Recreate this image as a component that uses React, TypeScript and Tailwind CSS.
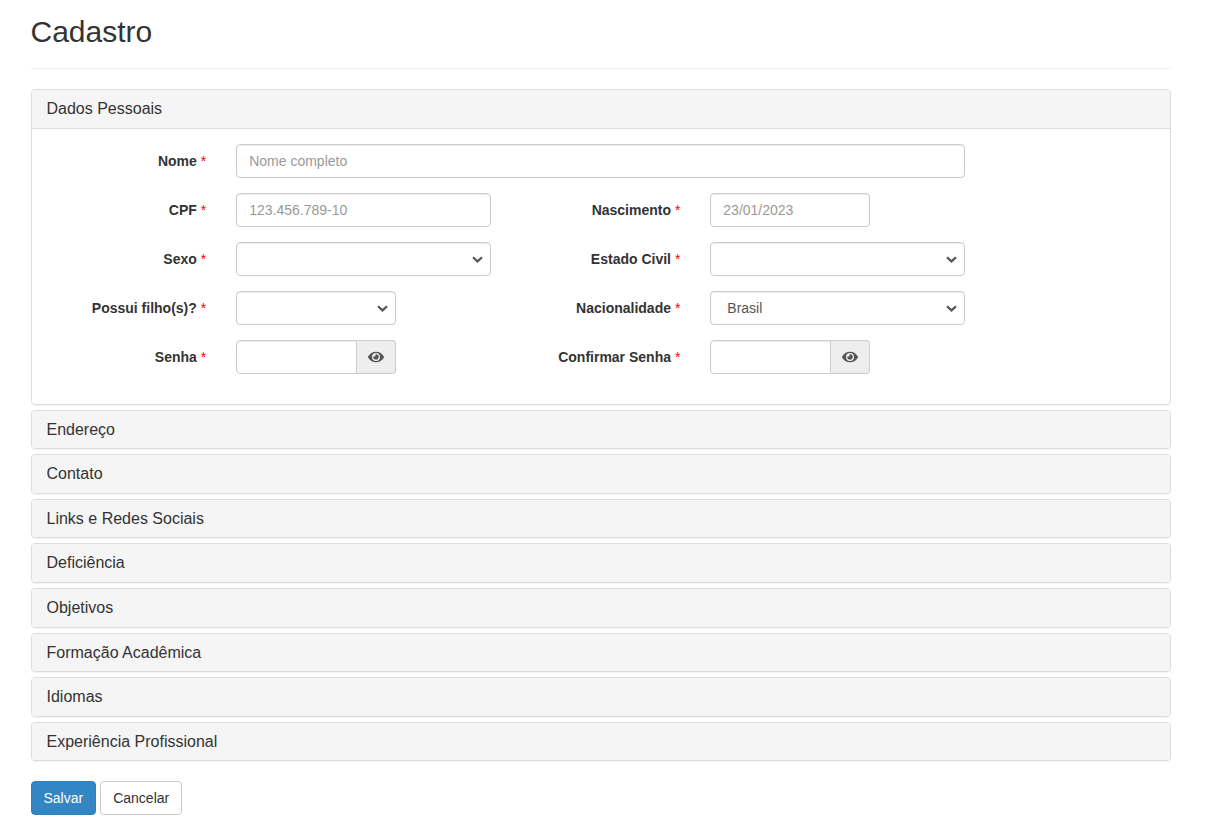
import React from 'react';
import { FaEye } from 'react-icons/fa';

const fieldClass =
  'w-full h-[34px] px-3 py-[6px] text-sm text-[#555] bg-white border border-[#ccc] rounded-[4px] shadow-[inset_0_1px_1px_rgba(0,0,0,0.075)] placeholder:text-[#999] outline-none';

const Label = ({ text }: { text: string }) => (
  <label className="col-span-2 pt-[7px] text-right text-sm leading-[20px] font-bold text-[#333]">
    {text} <span className="font-normal text-[#f00]">*</span>
  </label>
);

const Select = ({ value }: { value?: string }) => (
  <div className="relative">
    <select className={`${fieldClass} pl-4 appearance-none`} defaultValue={value ?? ''}>
      <option value=""></option>
      {value && <option value={value}>{value}</option>}
    </select>
    {/* chevron drawn over the native select */}
    <svg
      className="absolute right-[7.5px] top-[14px] pointer-events-none"
      width="11"
      height="7"
      viewBox="0 0 11 7"
      fill="none"
    >
      <path d="M1 1.2 L5.5 5.4 L10 1.2" stroke="#555" strokeWidth="2.2" />
    </svg>
  </div>
);

const Password = () => (
  <div className="flex h-[34px]">
    <input
      type="text"
      className="w-[120px] h-[34px] min-w-0 grow px-3 py-[6px] text-sm text-[#555] bg-white border border-[#ccc] rounded-l-[4px] shadow-[inset_0_1px_1px_rgba(0,0,0,0.075)] outline-none"
    />
    <span className="w-[39px] shrink-0 flex items-center justify-center bg-[#eee] border border-l-0 border-[#ccc] rounded-r-[4px] text-[#555]">
      <FaEye size={16} />
    </span>
  </div>
);

const Row = ({ children }: { children: React.ReactNode }) => (
  <div className="grid grid-cols-12 gap-x-[30px]">{children}</div>
);

const collapsed = [
  'Endereço',
  'Contato',
  'Links e Redes Sociais',
  'Deficiência',
  'Objetivos',
  'Formação Acadêmica',
  'Idiomas',
  'Experiência Profissional',
];

const PanelHeading = ({ title }: { title: string }) => (
  <div className="px-[15px] py-[10px] bg-[#f5f5f5] text-base leading-[17.6px] text-[#333]">{title}</div>
);

export default function App() {
  return (
    <div
      className="w-[1140px] ml-[30.5px] pt-[15px] text-sm text-[#333]"
      style={{ fontFamily: '"Liberation Sans", Arial, sans-serif' }}
    >
      <div className="pb-[9px] mb-5 border-b border-[#eee]">
        <h1 className="mb-[11px] text-[30px] leading-[33px] font-normal text-[#333]">Cadastro</h1>
      </div>

      <div className="flex flex-col gap-[5px]">
        <div className="border border-[#ddd] rounded-[4px] overflow-hidden shadow-[0_1px_1px_rgba(0,0,0,0.05)]">
          <PanelHeading title="Dados Pessoais" />
          <div className="border-t border-[#ddd] pt-[15px] px-[15px] pb-[30px] flex flex-col gap-[15px]">
            <Row>
              <Label text="Nome" />
              <div className="col-span-8">
                <input type="text" placeholder="Nome completo" className={fieldClass} />
              </div>
            </Row>
            <Row>
              <Label text="CPF" />
              <div className="col-span-3">
                <input type="text" placeholder="123.456.789-10" className={fieldClass} />
              </div>
              <Label text="Nascimento" />
              <div className="col-span-2">
                <input type="text" placeholder="23/01/2023" className={fieldClass} />
              </div>
            </Row>
            <Row>
              <Label text="Sexo" />
              <div className="col-span-3">
                <Select />
              </div>
              <Label text="Estado Civil" />
              <div className="col-span-3">
                <Select />
              </div>
            </Row>
            <Row>
              <Label text="Possui filho(s)?" />
              <div className="col-span-2">
                <Select />
              </div>
              <div className="col-span-1" />
              <Label text="Nacionalidade" />
              <div className="col-span-3">
                <Select value="Brasil" />
              </div>
            </Row>
            <Row>
              <Label text="Senha" />
              <div className="col-span-2">
                <Password />
              </div>
              <div className="col-span-1" />
              <Label text="Confirmar Senha" />
              <div className="col-span-2">
                <Password />
              </div>
            </Row>
          </div>
        </div>

        {collapsed.map((title) => (
          <div
            key={title}
            className="border border-[#ddd] rounded-[4px] overflow-hidden shadow-[0_1px_1px_rgba(0,0,0,0.05)]"
          >
            <PanelHeading title={title} />
          </div>
        ))}
      </div>

      <div className="flex gap-1 mt-5">
        <button className="h-[34px] px-3 text-sm text-white bg-[#3286c4] border border-[#2f80bd] rounded-[4px]">
          Salvar
        </button>
        <button className="h-[34px] px-3 text-sm text-[#333] bg-white border border-[#ccc] rounded-[4px]">
          Cancelar
        </button>
      </div>
    </div>
  );
}
